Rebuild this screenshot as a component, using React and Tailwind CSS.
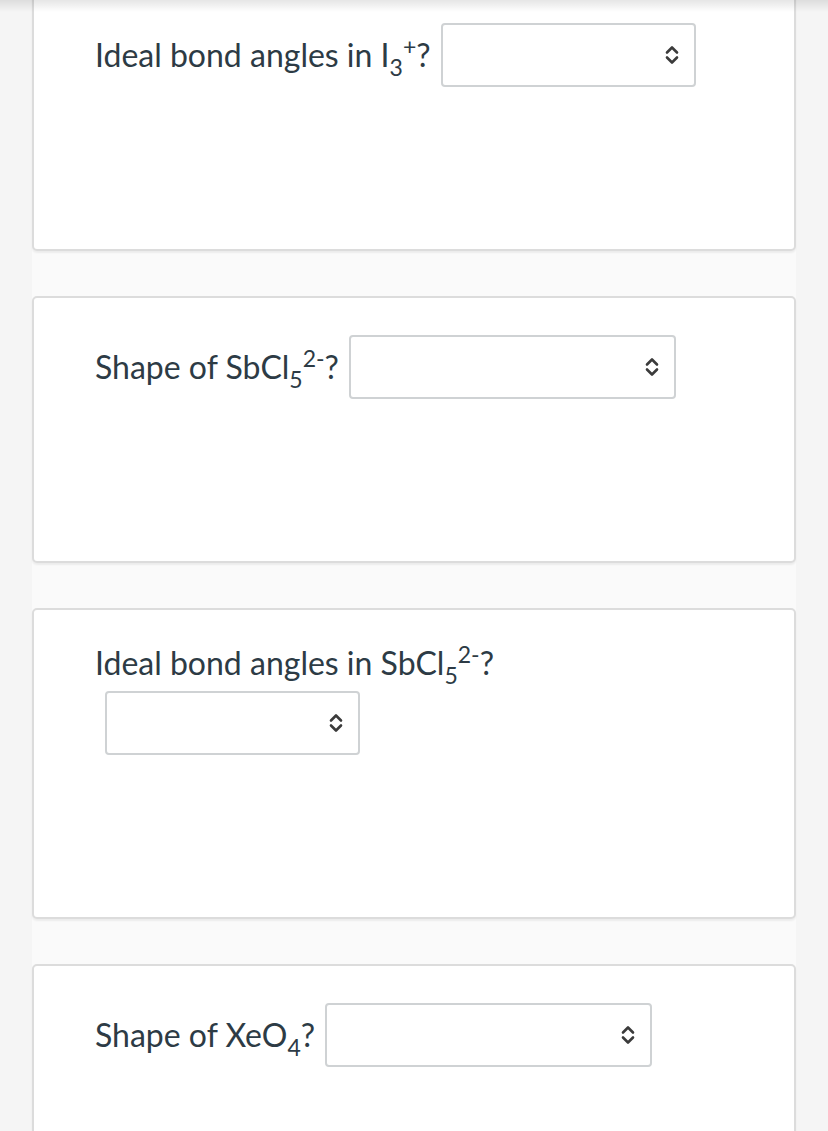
import React from 'react';

function Select({ width }) {
  return (
    <div
      className={`ml-[10px] flex h-[64px] shrink-0 items-center justify-end rounded-[4px] border-2 border-[#cfd2d4] bg-white pr-[14px] ${width}`}
    >
      <svg
        width="16"
        height="22"
        viewBox="0 0 16 22"
        fill="none"
        stroke="#3b3b3b"
        strokeWidth="2.6"
        strokeLinecap="round"
        strokeLinejoin="round"
      >
        <path d="M3 8.5 8 3.5 13 8.5" />
        <path d="M3 13.5 8 18.5 13 13.5" />
      </svg>
    </div>
  );
}

function Card({ children }) {
  return (
    <div className="rounded-[5px] border-2 border-[#dcdcdc] bg-white px-[61px] pt-[37px] pb-[162px] shadow-[0_2px_2px_rgba(0,0,0,0.06)]">
      <div className="flex flex-wrap items-center gap-y-[12px]">{children}</div>
    </div>
  );
}

function Q({ children }) {
  return <span className="text-[32px] leading-[32px] text-[#2d3b45]">{children}</span>;
}

// typographic offsets for the sub/superscripts, kept out of the line box
const sub = 'relative top-[9px] text-[23px] leading-none';
const sup = 'relative -top-[12px] text-[23px] leading-none';

export default function App() {
  return (
    <div
      className="relative min-h-screen overflow-hidden bg-[#f5f5f5]"
      style={{ fontFamily: 'Lato, "Open Sans", sans-serif' }}
    >
      <div className="pointer-events-none absolute inset-x-0 top-0 z-10 h-[12px] bg-gradient-to-b from-black/10 to-transparent" />
      <div className="mx-[32px] -mt-[16px] flex flex-col gap-[45px] bg-[#fafafa] pb-[40px]">
        <Card>
          <Q>
            Ideal bond angles in I<span className={sub}>3</span>
            <span className={sup}>+</span>?
          </Q>
          <Select width="w-[255px]" />
        </Card>
        <Card>
          <Q>
            Shape of SbCl<span className={sub}>5</span>
            <span className={sup}>2-</span>?
          </Q>
          <Select width="w-[327px]" />
        </Card>
        <Card>
          <Q>
            Ideal bond angles in SbCl<span className={sub}>5</span>
            <span className={sup}>2-</span>?
          </Q>
          <Select width="w-[255px]" />
        </Card>
        <Card>
          <Q>
            Shape of XeO<span className={sub}>4</span>?
          </Q>
          <Select width="w-[327px]" />
        </Card>
      </div>
    </div>
  );
}
